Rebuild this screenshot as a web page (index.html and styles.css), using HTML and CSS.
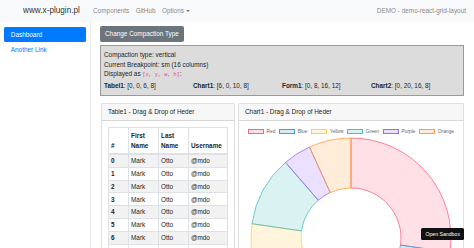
FILE: index.html
```html
<!DOCTYPE html>
<html lang="en">
<head>
    <meta charset="UTF-8">
    <meta name="viewport" content="width=device-width, initial-scale=1.0">
    <title>DEMO - demo-react-grid-layout</title>
    <link rel="stylesheet" href="styles.css">
</head>
<body>
    <nav class="navbar">
        <a class="brand" href="#">www.x-plugin.pl</a>
        <a class="nav-link" href="#">Components</a>
        <a class="nav-link" href="#">GitHub</a>
        <a class="nav-link" href="#">Options <span class="caret"></span></a>
        <span class="navbar-text">DEMO - demo-react-grid-layout</span>
    </nav>

    <div class="layout">
        <aside class="sidebar">
            <a class="pill active" href="#">Dashboard</a>
            <a class="pill" href="#">Another Link</a>
        </aside>

        <main class="main">
            <button class="btn">Change Compaction Type</button>

            <div class="info">
                <div>Compaction type: vertical</div>
                <div>Current Breakpoint: sm (16 columns)</div>
                <div>Displayed as <code>[x, y, w, h]</code>:</div>
                <div class="positions">
                    <div><b>Tabel1</b>: [0, 0, 6, 8]</div>
                    <div><b>Chart1</b>: [6, 0, 10, 8]</div>
                    <div><b>Form1</b>: [0, 8, 16, 12]</div>
                    <div><b>Chart2</b>: [0, 20, 16, 8]</div>
                </div>
            </div>

            <div class="grid">
                <div class="card">
                    <div class="card-header">Table1 - Drag &amp; Drop of Heder</div>
                    <div class="card-body">
                        <table class="table">
                            <colgroup>
                                <col class="c-num">
                                <col class="c-first">
                                <col class="c-last">
                                <col>
                            </colgroup>
                            <thead>
                                <tr><th>#</th><th>First Name</th><th>Last Name</th><th>Username</th></tr>
                            </thead>
                            <tbody>
                                <tr><th>0</th><td>Mark</td><td>Otto</td><td>@mdo</td></tr>
                                <tr><th>1</th><td>Mark</td><td>Otto</td><td>@mdo</td></tr>
                                <tr><th>2</th><td>Mark</td><td>Otto</td><td>@mdo</td></tr>
                                <tr><th>3</th><td>Mark</td><td>Otto</td><td>@mdo</td></tr>
                                <tr><th>4</th><td>Mark</td><td>Otto</td><td>@mdo</td></tr>
                                <tr><th>5</th><td>Mark</td><td>Otto</td><td>@mdo</td></tr>
                                <tr><th>6</th><td>Mark</td><td>Otto</td><td>@mdo</td></tr>
                                <tr><th>7</th><td>Mark</td><td>Otto</td><td>@mdo</td></tr>
                            </tbody>
                        </table>
                    </div>
                </div>

                <div class="card">
                    <div class="card-header">Chart1 - Drag &amp; Drop of Heder</div>
                    <div class="card-body chart-body">
                        <div class="legend">
                            <span class="item"><i class="box red"></i>Red</span>
                            <span class="item"><i class="box blue"></i>Blue</span>
                            <span class="item"><i class="box yellow"></i>Yellow</span>
                            <span class="item"><i class="box green"></i>Green</span>
                            <span class="item"><i class="box purple"></i>Purple</span>
                            <span class="item"><i class="box orange"></i>Orange</span>
                        </div>
                        <svg class="donut" width="204" height="204" viewBox="0 0 204 204">
                            <path fill="rgba(255,99,132,0.2)" stroke="rgb(255,99,132)" d="M102 2 A100 100 0 0 1 200.98 116.23 L151.49 109.12 A50 50 0 0 0 102 52 Z"/>
                            <path fill="rgba(54,162,235,0.2)" stroke="rgb(54,162,235)" d="M200.98 116.23 A100 100 0 0 1 6.05 130.17 L54.03 116.09 A50 50 0 0 0 151.49 109.12 Z"/>
                            <path fill="rgba(255,206,86,0.2)" stroke="rgb(255,206,86)" d="M6.05 130.17 A100 100 0 0 1 3.02 87.77 L52.51 94.88 A50 50 0 0 0 54.03 116.09 Z"/>
                            <path fill="rgba(75,192,192,0.2)" stroke="rgb(75,192,192)" d="M3.02 87.77 A100 100 0 0 1 36.51 26.42 L69.26 64.21 A50 50 0 0 0 52.51 94.88 Z"/>
                            <path fill="rgba(153,102,255,0.2)" stroke="rgb(153,102,255)" d="M36.51 26.42 A100 100 0 0 1 60.46 11.04 L81.23 56.52 A50 50 0 0 0 69.26 64.21 Z"/>
                            <path fill="rgba(255,159,64,0.2)" stroke="rgb(255,159,64)" d="M60.46 11.04 A100 100 0 0 1 102 2 L102 52 A50 50 0 0 0 81.23 56.52 Z"/>
                        </svg>
                    </div>
                </div>
            </div>
        </main>
    </div>

    <a class="sandbox" href="#">Open Sandbox</a>
</body>
</html>
```

FILE: styles.css
```css
html, body {
    overflow: hidden;
}
body {
    font-family: "Liberation Sans", Arial, sans-serif;
    font-size: 6.4px;
    line-height: 9.6px;
    color: #212529;
    margin: 0;
    background-color: white;
}
a {
    text-decoration: none;
}
.navbar {
    display: flex;
    align-items: center;
    height: 22px;
    padding: 0 8px 0 23px;
    background-color: #f8f9fa;
}
.brand {
    font-size: 8.2px;
    color: rgba(0, 0, 0, 0.85);
    margin-right: 10px;
}
.nav-link {
    color: rgba(0, 0, 0, 0.5);
    padding: 0 3.2px;
}
.caret {
    display: inline-block;
    vertical-align: 1px;
    border-top: 2px solid;
    border-left: 2px solid transparent;
    border-right: 2px solid transparent;
}
.navbar-text {
    margin-left: auto;
    color: rgba(0, 0, 0, 0.5);
}
.layout {
    display: flex;
}
.sidebar {
    width: 82px;
    min-height: 230px;
    padding: 5px 4px;
    border-right: 1px solid #e9ecef;
    display: flex;
    flex-direction: column;
}
.pill {
    color: #007bff;
    padding: 2.8px 6.8px;
    border-radius: 1.6px;
}
.pill.active {
    background-color: #007bff;
    color: white;
}
.main {
    flex: 1;
    padding: 4px 10px 0 9px;
}
.btn {
    font-family: inherit;
    font-size: 6.4px;
    line-height: 9.6px;
    color: white;
    background-color: #6c757d;
    border: 1px solid #6c757d;
    border-radius: 1.6px;
    padding: 2.2px 4px;
    cursor: pointer;
}
.info {
    margin-top: 3px;
    padding: 4px 3px 5px 3px;
    background-color: #dcdcdc;
    border: 1px solid #9a9a9a;
}
code {
    font-family: "Liberation Mono", monospace;
    font-size: 5.2px;
    color: #e83e8c;
}
.positions {
    display: grid;
    grid-template-columns: repeat(4, 1fr);
}
.grid {
    display: grid;
    grid-template-columns: 134px 226px;
    gap: 3px;
    margin-top: 7px;
    padding-left: 1px;
}
.card {
    border: 1px solid rgba(0, 0, 0, 0.125);
    border-radius: 1.6px;
    background-color: white;
}
.card-header {
    padding: 3px 6px;
    background-color: rgba(0, 0, 0, 0.03);
    border-bottom: 1px solid rgba(0, 0, 0, 0.125);
}
.card-body {
    padding: 6px;
}
.table {
    width: 120px;
    table-layout: fixed;
    border-collapse: collapse;
}
.c-num { width: 20px; }
.c-first { width: 30px; }
.c-last { width: 30px; }
.table th, .table td {
    border: 1px solid #dee2e6;
    padding: 1.1px 2px;
    text-align: left;
    vertical-align: top;
}
.table thead th {
    vertical-align: bottom;
    padding: 3px 2px;
    border-bottom-width: 2px;
}
.table tbody tr:nth-child(odd) {
    background-color: rgba(0, 0, 0, 0.05);
}
.chart-body {
    display: flex;
    flex-direction: column;
    align-items: center;
}
.legend {
    display: flex;
    gap: 4px;
    margin-top: 2px;
    font-size: 4.8px;
    line-height: 5px;
    color: #666;
}
.item {
    display: flex;
    align-items: center;
    gap: 2.4px;
}
.box {
    width: 14px;
    height: 3.4px;
    border: 1px solid;
}
.red { background: rgba(255, 99, 132, 0.2); border-color: rgb(255, 99, 132); }
.blue { background: rgba(54, 162, 235, 0.2); border-color: rgb(54, 162, 235); }
.yellow { background: rgba(255, 206, 86, 0.2); border-color: rgb(255, 206, 86); }
.green { background: rgba(75, 192, 192, 0.2); border-color: rgb(75, 192, 192); }
.purple { background: rgba(153, 102, 255, 0.2); border-color: rgb(153, 102, 255); }
.orange { background: rgba(255, 159, 64, 0.2); border-color: rgb(255, 159, 64); }
.donut {
    margin-top: 2px;
    stroke-width: 0.8;
}
.sandbox {
    position: fixed;
    right: 10px;
    bottom: 8px;
    background-color: #111;
    color: white;
    font-size: 5.2px;
    line-height: 12px;
    padding: 0 4px;
    border-radius: 1.5px;
}
```
